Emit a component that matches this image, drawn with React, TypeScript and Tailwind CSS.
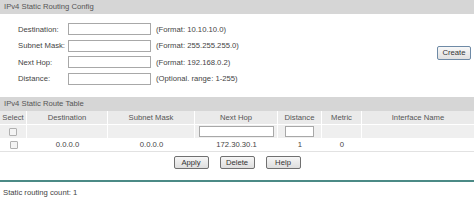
export default function App() {
  const cols = 'grid grid-cols-[27px_81px_87px_83px_44px_40px_1fr]'
  const btn =
    'h-[13px] w-[35px] rounded-[2px] border border-[#707070] bg-gradient-to-b from-[#f6f6f6] to-[#dedede] text-[7.7px] leading-none text-[#333] flex items-center justify-center'

  return (
    <div className="w-[474px] h-[202px] bg-white font-['Liberation_Sans',Arial,sans-serif] text-[7.7px] text-[#444] overflow-hidden whitespace-nowrap">
      {/* config section */}
      <div className="h-[14px] bg-[#d6d6d6] pl-[4px] flex items-center text-[#555]">IPv4 Static Routing Config</div>
      <div className="h-[83px] flex">
        <div className="flex flex-col pt-[7px] pl-[18px]">
          {[
            ['Destination:', '(Format: 10.10.10.0)'],
            ['Subnet Mask:', '(Format: 255.255.255.0)'],
            ['Next Hop:', '(Format: 192.168.0.2)'],
            ['Distance:', '(Optional. range: 1-255)'],
          ].map(([label, hint]) => (
            <div key={label} className="h-[16.6px] flex items-center">
              <span className="w-[50px] shrink-0">{label}</span>
              <input className="w-[83px] h-[12px] shrink-0 border border-[#a8a8a8] bg-white outline-none" />
              <span className="ml-[5px]">{hint}</span>
            </div>
          ))}
        </div>
        <div className="flex-1 flex justify-end items-start pt-[32px] pr-[3px]">
          <button className="h-[14px] w-[34px] rounded-[2px] border border-[#6e8aa6] bg-gradient-to-b from-[#f8f8f8] to-[#e0e0e0] text-[7.7px] leading-none text-[#333] flex items-center justify-center">
            Create
          </button>
        </div>
      </div>

      {/* route table */}
      <div className="h-[14px] bg-[#d6d6d6] pl-[4px] flex items-center text-[#555]">IPv4 Static Route Table</div>
      <div className={`${cols} h-[13px] bg-[#eaeaea] text-[#555] divide-x divide-white`}>
        {['Select', 'Destination', 'Subnet Mask', 'Next Hop', 'Distance', 'Metric', 'Interface Name'].map((h) => (
          <div key={h} className="flex items-center justify-center">{h}</div>
        ))}
      </div>
      <div className={`${cols} h-[14px] bg-[#efefef] divide-x divide-white border-t border-white`}>
        <div className="flex items-center justify-center">
          <span className="w-[8px] h-[8px] border border-[#b0b0b0] rounded-[1px] bg-[#f4f4f4]" />
        </div>
        <div />
        <div />
        <div className="flex items-center justify-center">
          <input className="w-[75px] h-[11px] border border-[#a8a8a8] bg-white outline-none" />
        </div>
        <div className="flex items-center justify-center">
          <input className="w-[29px] h-[11px] border border-[#a8a8a8] bg-white outline-none" />
        </div>
        <div />
        <div />
      </div>
      <div className={`${cols} h-[14px] bg-white border-b border-[#e2e2e2]`}>
        <div className="flex items-center justify-center">
          <span className="w-[8px] h-[8px] border border-[#b0b0b0] rounded-[1px] bg-[#f4f4f4]" />
        </div>
        <div className="flex items-center justify-center">0.0.0.0</div>
        <div className="flex items-center justify-center">0.0.0.0</div>
        <div className="flex items-center justify-center">172.30.30.1</div>
        <div className="flex items-center justify-center">1</div>
        <div className="flex items-center justify-center">0</div>
        <div />
      </div>

      <div className="flex justify-center gap-[11px] pt-[4px] h-[28px]">
        <button className={btn}>Apply</button>
        <button className={btn}>Delete</button>
        <button className={btn}>Help</button>
      </div>
      <div className="h-[2px] bg-[#4b8a86]" />
      <div className="pl-[3px] pt-[5px] text-[#444]">Static routing count: 1</div>
    </div>
  )
}
